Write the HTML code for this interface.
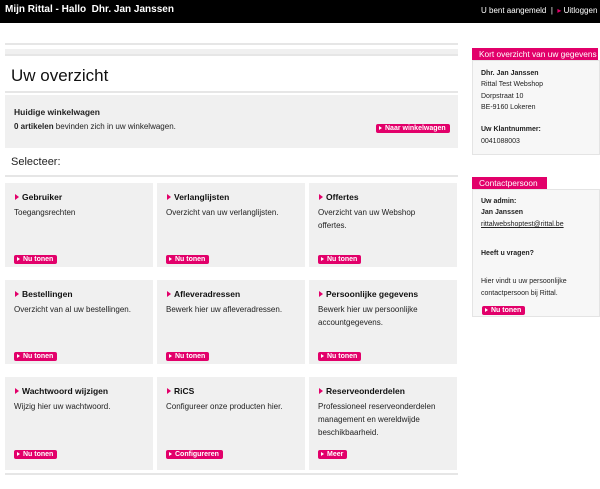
<!DOCTYPE html>
<html><head><meta charset="utf-8"><style>
*{margin:0;padding:0;box-sizing:border-box}
body{width:600px;height:489px;background:#fff;font-family:"Liberation Sans",Arial,sans-serif;color:#222;position:relative;overflow:hidden;font-size:8px}
.a{position:absolute}
.hdr{left:0;top:0;width:600px;height:23px;background:#000;color:#fff}
.line{background:#e6e6e6;height:2px}
.btn{position:absolute;background:#e2006a;color:#fff;font-weight:bold;font-size:7px;height:9px;line-height:9px;padding:0 4px 0 3px;border-radius:2px}
.btn:before{content:"";display:inline-block;border-left:3px solid #fff;border-top:2.5px solid transparent;border-bottom:2.5px solid transparent;margin-right:3px;vertical-align:0}
.tile{position:absolute;background:#f0f0f0;width:148px}
.tile h3{position:absolute;left:17px;top:9px;font-size:8.5px;font-weight:bold;color:#111}
.tile h3:before{content:"";position:absolute;left:-7px;top:2px;border-left:4px solid #e2006a;border-top:3px solid transparent;border-bottom:3px solid transparent}
.tile p{position:absolute;left:9px;top:23px;right:18px;font-size:8px;line-height:13px;color:#222}
.tile .btn{left:9px}
.sh{position:absolute;background:#e2006a;color:#fff;font-size:8.3px;height:12px;line-height:12px;padding-left:7px;white-space:nowrap;overflow:hidden}
.sb{position:absolute;background:#f7f7f7;border:1px solid #e4e4e4;color:#222}
.sb div{position:absolute;left:8px;font-size:7px;white-space:nowrap}
</style></head><body>
<div class="a hdr"><span class="a" style="left:5px;top:4px;font-size:10px;font-weight:bold">Mijn Rittal - Hallo&nbsp; Dhr. Jan Janssen</span>
<span class="a" style="left:481px;top:6px;font-size:8px">U bent aangemeld&nbsp;&nbsp;|&nbsp;&nbsp;<span style="color:#e2006a">&#9656;</span> Uitloggen</span></div>
<div class="a line" style="left:5px;top:43px;width:453px"></div>
<div class="a" style="left:5px;top:49px;width:453px;height:5px;background:#f0f0f0"></div>
<div class="a line" style="left:5px;top:54px;width:453px"></div>
<div class="a" style="left:11px;top:66px;font-size:17px;color:#111">Uw overzicht</div>
<div class="a line" style="left:5px;top:91px;width:453px"></div>
<div class="a" style="left:5px;top:95px;width:453px;height:53px;background:#f0f0f0"></div>
<div class="a" style="left:14px;top:107px;font-size:8.5px;font-weight:bold">Huidige winkelwagen</div>
<div class="a" style="left:14px;top:122px;font-size:8px"><b>0 artikelen</b> bevinden zich in uw winkelwagen.</div>
<div class="btn" style="left:376px;top:124px">Naar winkelwagen</div>
<div class="a" style="left:11px;top:156px;font-size:11px">Selecteer:</div>
<div class="a line" style="left:5px;top:175px;width:453px"></div>

<div class="tile" style="left:5px;top:183px;height:84px"><h3>Gebruiker</h3><p>Toegangsrechten</p><div class="btn" style="top:72px">Nu tonen</div></div>
<div class="tile" style="left:157px;top:183px;height:84px"><h3>Verlanglijsten</h3><p>Overzicht van uw verlanglijsten.</p><div class="btn" style="top:72px">Nu tonen</div></div>
<div class="tile" style="left:309px;top:183px;height:84px"><h3>Offertes</h3><p>Overzicht van uw Webshop offertes.</p><div class="btn" style="top:72px">Nu tonen</div></div>

<div class="tile" style="left:5px;top:280px;height:84px"><h3>Bestellingen</h3><p>Overzicht van al uw bestellingen.</p><div class="btn" style="top:72px">Nu tonen</div></div>
<div class="tile" style="left:157px;top:280px;height:84px"><h3>Afleveradressen</h3><p>Bewerk hier uw afleveradressen.</p><div class="btn" style="top:72px">Nu tonen</div></div>
<div class="tile" style="left:309px;top:280px;height:84px"><h3>Persoonlijke gegevens</h3><p>Bewerk hier uw persoonlijke accountgegevens.</p><div class="btn" style="top:72px">Nu tonen</div></div>

<div class="tile" style="left:5px;top:377px;height:93px"><h3>Wachtwoord wijzigen</h3><p>Wijzig hier uw wachtwoord.</p><div class="btn" style="top:73px">Nu tonen</div></div>
<div class="tile" style="left:157px;top:377px;height:93px"><h3>RiCS</h3><p>Configureer onze producten hier.</p><div class="btn" style="top:73px">Configureren</div></div>
<div class="tile" style="left:309px;top:377px;height:93px"><h3>Reserveonderdelen</h3><p>Professioneel reserveonderdelen management en wereldwijde beschikbaarheid.</p><div class="btn" style="top:73px">Meer</div></div>
<div class="a line" style="left:5px;top:473px;width:453px"></div>

<div class="sh" style="left:472px;top:48px;width:126px">Kort overzicht van uw gegevens</div>
<div class="sb" style="left:472px;top:60px;width:128px;height:95px">
<div style="top:9px"><b>Dhr. Jan Janssen</b></div>
<div style="top:20px">Rittal Test Webshop</div>
<div style="top:32px">Dorpstraat 10</div>
<div style="top:43px">BE-9160 Lokeren</div>
<div style="top:65px"><b>Uw Klantnummer:</b></div>
<div style="top:77px">0041088003</div>
</div>
<div class="sh" style="left:472px;top:177px;width:75px">Contactpersoon</div>
<div class="sb" style="left:472px;top:189px;width:128px;height:128px">
<div style="top:8px"><b>Uw admin:</b></div>
<div style="top:19px"><b>Jan Janssen</b></div>
<div style="top:31px"><u>rittalwebshoptest@rittal.be</u></div>
<div style="top:60px"><b>Heeft u vragen?</b></div>
<div style="top:88px">Hier vindt u uw persoonlijke</div>
<div style="top:100px">contactpersoon bij Rittal.</div>
</div>
<div class="btn" style="left:482px;top:306px">Nu tonen</div>
</body></html>
